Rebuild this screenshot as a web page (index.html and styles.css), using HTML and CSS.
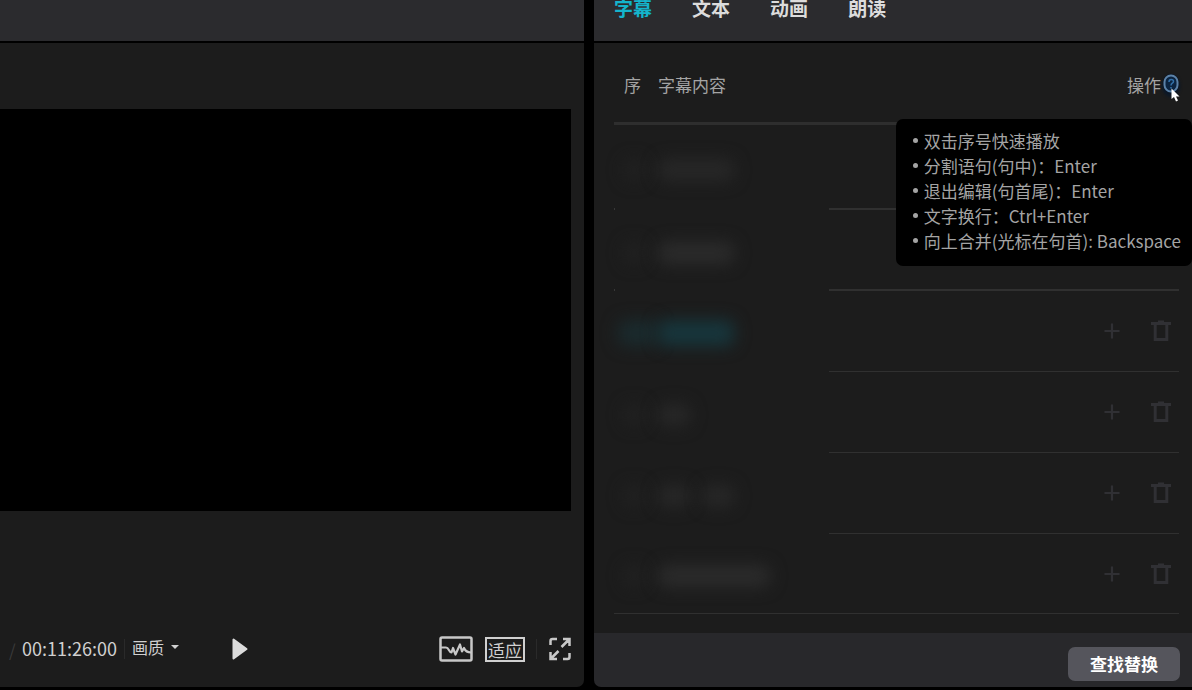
FILE: index.html
```html
<!DOCTYPE html>
<html lang="zh-CN">
<head>
    <meta charset="UTF-8">
    <meta name="viewport" content="width=device-width, initial-scale=1.0">
    <title>字幕</title>
    <link rel="stylesheet" href="styles.css">
</head>
<body>
    <svg class="sprite">
        <symbol id="plus" viewBox="0 0 16 16"><path d="M8 0.5v15M0.5 8h15" fill="none" stroke="currentColor" stroke-width="2.2"/></symbol>
        <symbol id="trash" viewBox="0 0 20 22"><path d="M0 3.5h20M7 2h6M4.200 4v15.500h11.600V4" fill="none" stroke="currentColor" stroke-width="3"/></symbol>
    </svg>
    <div class="editor">
        <!-- player -->
        <section class="panel player">
            <div class="panel-head"></div>
            <div class="panel-body">
                <div class="screen"></div>
                <div class="controls">
                    <span class="slash">/</span>
                    <span class="time">00:11:26:00</span>
                    <span class="divider"></span>
                    <button class="quality">画质<i class="caret"></i></button>
                    <button class="play" aria-label="播放">
                        <svg width="16" height="22" viewBox="0 0 16 22"><path d="M1.5 1.5v19L14.5 11z" fill="#dcdcdc" stroke="#dcdcdc" stroke-width="2" stroke-linejoin="round"/></svg>
                    </button>
                    <button class="scope" aria-label="示波器">
                        <svg width="34" height="26" viewBox="0 0 34 26" fill="none" stroke="#c8c8c8" stroke-linejoin="round">
                            <rect x="1.5" y="1.5" width="31" height="23" rx="1.5" stroke-width="2.5"/>
                            <path d="M2 11.500h5c3 0 3 5 5.500 5L14 12l2.500 6.500L21 8.500l2 7 2-3.500c1.500 3.500 3.500 4.500 7 4.500" stroke-width="2.2"/>
                        </svg>
                    </button>
                    <button class="fit">适应</button>
                    <span class="divider"></span>
                    <button class="full" aria-label="全屏">
                        <svg width="22" height="24" viewBox="0 0 22 24" fill="none" stroke="#c8c8c8" stroke-width="2.5">
                            <path d="M1.500 8V4q0-2 2-2H8M14 2h6.500v7M20 2.500L12.500 10M20.500 16v4q0 2-2 2H14M8 22H1.500v-7M2 21.500L9.500 14"/>
                        </svg>
                    </button>
                </div>
            </div>
        </section>

        <!-- subtitle list -->
        <section class="panel subtitles">
            <nav class="panel-head tabs">
                <a href="#" class="tab active">字幕</a>
                <a href="#" class="tab">文本</a>
                <a href="#" class="tab">动画</a>
                <a href="#" class="tab">朗读</a>
            </nav>
            <div class="panel-body">
                <table class="list">
                    <thead>
                        <tr>
                            <th class="col-index">序</th>
                            <th class="col-text">字幕内容</th>
                            <th class="col-action">
                                <div class="action-head">操作
                                    <span class="help">
                                        <svg width="16" height="20" viewBox="0 0 16 20"><rect x="1.5" y="1.5" width="13" height="16" rx="6.500" fill="#0c2440" stroke="#5c82a8" stroke-width="2"/><path d="M6 8c0-3.500 4.500-3 4.500-.5 0 2-2.500 1.500-2.500 4M8 13v1.500" fill="none" stroke="#3270a8" stroke-width="1.5"/></svg>
                                        <svg class="pointer" width="9" height="14" viewBox="0 0 9 14"><path d="M.5.5v10.500l2.500-2 2 4.500 2-1-2-4H8.500z" fill="#fff"/></svg>
                                    </span>
                                </div>
                            </th>
                        </tr>
                    </thead>
                    <tbody>
                        <tr class="first thick marked">
                            <td><span class="blur faint w20"></span></td>
                            <td><span class="blur w80"></span></td>
                            <td class="actions"></td>
                        </tr>
                        <tr class="thick marked">
                            <td><span class="blur faint w20"></span></td>
                            <td><span class="blur bright w80"></span></td>
                            <td class="actions"></td>
                        </tr>
                        <tr class="current">
                            <td><span class="blur w40"></span></td>
                            <td><span class="blur w80"></span></td>
                            <td class="actions"><div class="tools">
                                <button aria-label="添加"><svg width="16" height="16"><use href="#plus"/></svg></button>
                                <button aria-label="删除"><svg width="20" height="22"><use href="#trash"/></svg></button>
                            </div></td>
                        </tr>
                        <tr>
                            <td><span class="blur faint w20"></span></td>
                            <td><span class="blur w30"></span></td>
                            <td class="actions"><div class="tools">
                                <button aria-label="添加"><svg width="16" height="16"><use href="#plus"/></svg></button>
                                <button aria-label="删除"><svg width="20" height="22"><use href="#trash"/></svg></button>
                            </div></td>
                        </tr>
                        <tr>
                            <td><span class="blur faint w20"></span></td>
                            <td><span class="blur w30"></span><span class="blur w30"></span></td>
                            <td class="actions"><div class="tools">
                                <button aria-label="添加"><svg width="16" height="16"><use href="#plus"/></svg></button>
                                <button aria-label="删除"><svg width="20" height="22"><use href="#trash"/></svg></button>
                            </div></td>
                        </tr>
                        <tr class="last">
                            <td><span class="blur faint w20"></span></td>
                            <td><span class="blur bright w110"></span></td>
                            <td class="actions"><div class="tools">
                                <button aria-label="添加"><svg width="16" height="16"><use href="#plus"/></svg></button>
                                <button aria-label="删除"><svg width="20" height="22"><use href="#trash"/></svg></button>
                            </div></td>
                        </tr>
                    </tbody>
                </table>
                <ul class="tooltip">
                    <li>双击序号快速播放</li>
                    <li>分割语句(句中)：Enter</li>
                    <li>退出编辑(句首尾)：Enter</li>
                    <li>文字换行：Ctrl+Enter</li>
                    <li>向上合并(光标在句首): Backspace</li>
                </ul>
            </div>
            <div class="footer">
                <button class="replace">查找替换</button>
            </div>
        </section>
    </div>
</body>
</html>
```
FILE: styles.css
```css
* {
    box-sizing: border-box;
    margin: 0;
    padding: 0;
}

body {
    background-color: #000;
    color: #a4a4a4;
    font-family: "Noto Sans CJK SC", sans-serif;
    font-size: 17px;
    line-height: 25px;
}

button {
    border: none;
    background: none;
    color: inherit;
    font: inherit;
    cursor: pointer;
}

svg {
    display: block;
}

.sprite {
    position: absolute;
    width: 0;
    height: 0;
}

.editor {
    display: flex;
    gap: 10px;
    min-height: 100vh;
    padding-bottom: 3px;
}

.panel {
    display: flex;
    flex-direction: column;
    gap: 2px;
    border-radius: 0 0 7px 7px;
    overflow: hidden;
}

.player {
    flex: 0 0 49%;
    border-bottom-left-radius: 0;
}

.subtitles {
    flex: 1;
    gap: 0;
    border-bottom-right-radius: 0;
}

.panel-head {
    height: 41px;
    background-color: #2b2b2e;
}

.panel-body {
    flex: 1;
    position: relative;
    display: flex;
    flex-direction: column;
    background-color: #1c1c1c;
}

/* player */
.screen {
    flex: 1;
    margin: 66px 13px 0 0;
    background-color: #000;
}

.controls {
    display: flex;
    align-items: center;
    height: 176px;
    padding: 100px 13px 0 9px;
    color: #d0d0d0;
}

.slash {
    width: 13px;
    color: #3a3a3a;
}

.time {
    padding-bottom: 2px;
    font-size: 18px;
}

.divider {
    width: 1px;
    height: 20px;
    margin: 0 7px;
    background-color: #2a2a2a;
}

.quality {
    display: flex;
    align-items: center;
    gap: 7px;
    padding-bottom: 4px;
    font-size: 16px;
}

.caret {
    border: 4px solid transparent;
    border-top-color: #d0d0d0;
    border-bottom: none;
}

.play {
    margin-left: 53px;
}

.scope {
    margin-left: auto;
}

.fit {
    margin: 0 4px 0 12px;
    padding: 0 1px;
    border: 2px solid #d0d0d0;
    line-height: 21px;
}

.full {
    margin-left: 5px;
}

/* subtitle list */
.tabs {
    display: flex;
    align-items: flex-start;
    gap: 40px;
    padding-left: 20px;
}

.tab {
    color: #dcdcdc;
    font-size: 19px;
    font-weight: bold;
    line-height: 15px;
    text-decoration: none;
}

.tab.active {
    color: #14b4cc;
}

.subtitles .panel-body {
    margin-top: 2px;
    padding: 0 13px 19px 20px;
}

.list {
    width: 100%;
    table-layout: fixed;
    border-spacing: 0;
}

.list th {
    height: 82px;
    padding-top: 3px;
    border-bottom: 3px solid #2e2e2e;
    font-weight: normal;
    text-align: left;
}

.list .col-index {
    width: 44px;
    padding-left: 10px;
}

.col-text {
    width: 171px;
}

.action-head {
    display: flex;
    justify-content: flex-end;
    align-items: center;
    gap: 2px;
}

.help {
    position: relative;
    border-radius: 50%;
    background-color: #0c1828;
    box-shadow: 0 2px 3px 1px #0c1828;
}

.pointer {
    position: absolute;
    left: 8px;
    top: 14px;
}

.list td {
    height: 81px;
}

.list .first td {
    height: 85px;
}

.list .last td {
    height: 80px;
    border-bottom: 1px solid #303030;
}

.list .actions {
    border-bottom: 1px solid #303030;
}

.list .thick .actions {
    border-bottom-width: 2px;
}

.marked td:first-child {
    background: linear-gradient(#383838, #383838) left bottom / 1px 2px no-repeat;
}

.tools {
    display: flex;
    justify-content: flex-end;
    align-items: center;
    gap: 31px;
    padding-right: 8px;
    color: #303034;
}

.blur {
    display: inline-block;
    height: 22px;
    margin-right: 12px;
    border-radius: 8px;
    background-color: #272727;
    filter: blur(8px);
    vertical-align: middle;
}

.blur.faint {
    margin-left: 10px;
    background-color: #212121;
}

.blur.bright {
    background-color: #2b2b2b;
}

.current .blur {
    height: 26px;
    margin: 0;
    background-color: #17363c;
}

.current .w40 {
    margin-left: 4px;
    background-color: #1a2a2d;
}

.w20 {
    width: 20px;
}

.w30 {
    width: 32px;
}

.w40 {
    width: 40px;
}

.w80 {
    width: 76px;
}

.w110 {
    width: 112px;
}

.tooltip {
    position: absolute;
    top: 76px;
    right: 0;
    padding: 9px 11px 13px 17px;
    border-radius: 7px;
    background-color: #000;
    list-style: none;
    white-space: nowrap;
}

.tooltip li {
    display: flex;
    align-items: center;
    gap: 6px;
}

.tooltip li::before {
    content: "";
    width: 5px;
    height: 5px;
    border-radius: 50%;
    background-color: #a4a4a4;
}

.footer {
    display: flex;
    justify-content: flex-end;
    padding: 14px 12px 6px;
    background-color: #28282b;
}

.replace {
    padding: 4px 22px 5px;
    border-radius: 7px;
    background-color: #55555c;
    color: #fff;
    font-weight: bold;
}
```
